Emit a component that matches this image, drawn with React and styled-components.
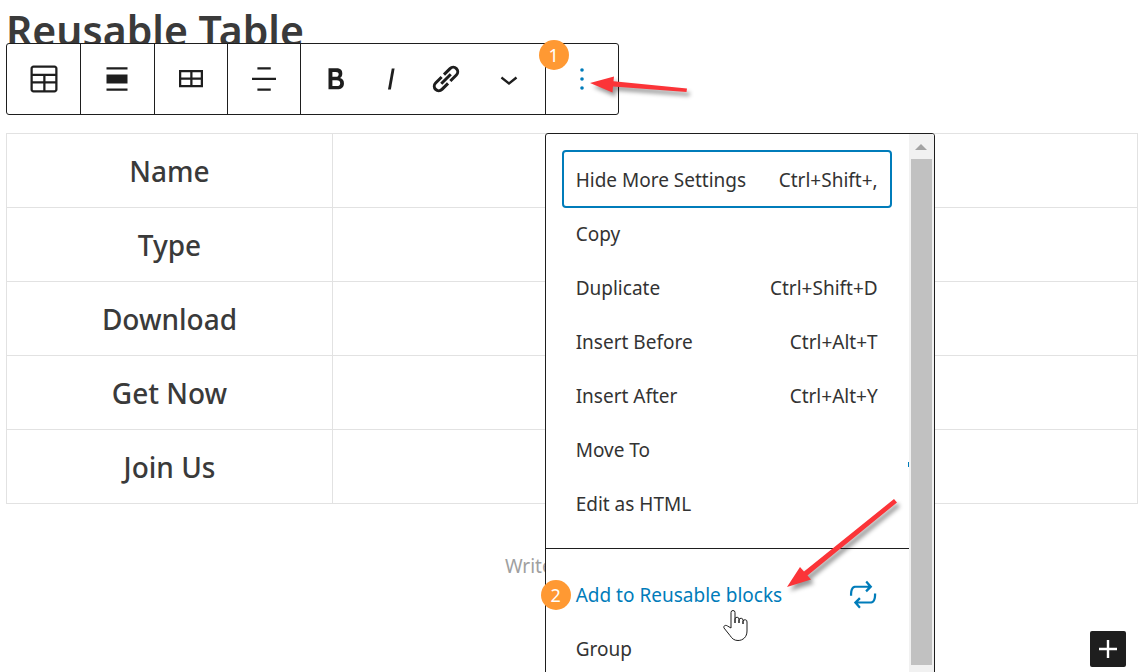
import React from "react";
import styled, { createGlobalStyle, css } from "styled-components";

const ink = "#1e1e1e";
const accent = "#007cba";
const sans = '"Segoe UI", "Noto Sans", "Open Sans", sans-serif';

const GlobalStyle = createGlobalStyle`
  *, *::before, *::after { box-sizing: border-box; }
  body { margin: 0; background: #fff; color: ${ink}; font-family: ${sans}; }
  button { font: inherit; color: inherit; background: none; border: 0; padding: 0; margin: 0; cursor: pointer; }
`;

const Editor = styled.main`
  position: relative;
  height: 100vh;
  overflow: hidden;
  padding: 0 6px;
`;

const Title = styled.h1`
  margin: 0;
  height: 43px;
  font-size: 41px;
  line-height: 60px;
  font-weight: 600;
  color: #3a3a3a;
`;

const Toolbar = styled.div`
  position: relative;
  z-index: 2;
  display: grid;
  grid-template-columns: 3fr 3fr 3fr 3fr 10fr 3fr;
  width: 613px;
  height: 72px;
  border: 1px solid ${ink};
  border-radius: 3px;
  background: #fff;
`;

const Group = styled.div`
  position: relative;
  display: flex;
  padding-left: ${(p) => (p.$inset ? "7px" : 0)};
  & + & { border-left: 1px solid ${ink}; }
`;

const ToolButton = styled.button`
  display: flex;
  align-items: center;
  justify-content: center;
  flex: ${(p) => (p.$fixed ? "0 0 55px" : "1")};
  color: ${(p) => (p.$active ? accent : ink)};
`;

const Icon = styled.svg.attrs({ viewBox: "0 0 24 24", "aria-hidden": true })`
  display: block;
  width: 36px;
  height: 36px;
  fill: currentColor;
`;

const Badge = styled.span`
  position: absolute;
  top: ${(p) => p.$top};
  left: ${(p) => p.$left};
  display: flex;
  align-items: center;
  justify-content: center;
  width: 30px;
  height: 30px;
  border-radius: 50%;
  background: #ff9933;
  color: #fff;
  font-size: 18px;
`;

const ArrowSvg = styled.svg`
  position: absolute;
  z-index: 3;
  top: ${(p) => p.$top};
  left: ${(p) => p.$left};
  overflow: visible;
  pointer-events: none;
  fill: #fb3438;
  filter: drop-shadow(3px 4px 2px rgba(0, 0, 0, 0.4));
`;

const Figure = styled.figure`
  margin: 18px 0 0;
`;

const Table = styled.table`
  width: 100%;
  border-collapse: collapse;
  table-layout: fixed;
`;

const Cell = styled.td`
  height: 74px;
  padding: 0;
  border: 1px solid #e2e2e2;
  text-align: center;
  font-size: 28px;
  font-weight: 500;
  color: #3a3a3a;
  &:first-child { width: 326px; }
`;

const Caption = styled.figcaption`
  margin-top: 48px;
  text-align: center;
  font-size: 19px;
  line-height: 28px;
  color: #a0a0a0;
`;

const Menu = styled.div`
  position: absolute;
  top: 89px;
  left: -1px;
  display: flex;
  width: 390px;
  height: 580px;
  overflow: hidden;
  border: 1px solid ${ink};
  border-radius: 3px;
  background: #fff;
`;

const MenuBody = styled.div`
  flex: 1;
  position: relative;
`;

const MenuGroup = styled.div`
  padding: 18px 19px 18px 18px;
  & + & { border-top: 1px solid ${ink}; }
`;

const MenuItem = styled.button`
  display: flex;
  align-items: center;
  justify-content: space-between;
  width: 100%;
  height: 54px;
  padding: 2px 12px 0;
  font-size: 19px;
  color: #333;
  text-align: left;
  white-space: nowrap;
  border-radius: 2px;
  ${(p) => p.$focused && css`outline: 2px solid ${accent};`}
  ${(p) => p.$active && css`color: ${accent}; padding-right: 9px;`}
`;

const ResizeMark = styled.span`
  position: absolute;
  top: 328px;
  right: 0;
  width: 1px;
  height: 5px;
  background: ${accent};
`;

const Scrollbar = styled.div`
  display: flex;
  flex-direction: column;
  align-items: center;
  width: 25px;
  background: #f1f1f1;
`;

const ScrollArrow = styled.svg`
  flex: none;
  width: 12px;
  height: 25px;
  fill: #a3a3a3;
`;

const Thumb = styled.div`
  width: 21px;
  height: 506px;
  background: #c1c1c1;
`;

const Cursor = styled.svg`
  position: absolute;
  z-index: 3;
  top: 609px;
  left: 722px;
  width: 26px;
  height: 33px;
  fill: #fff;
  stroke: ${ink};
  stroke-linejoin: round;
`;

const Inserter = styled.button`
  position: absolute;
  right: 18px;
  bottom: 5px;
  width: 36px;
  height: 36px;
  border-radius: 2px;
  background: ${ink};
  color: #fff;
`;

const paths = {
  table: "M19 3H5c-1.1 0-2 .9-2 2v14c0 1.1.9 2 2 2h14c1.1 0 2-.9 2-2V5c0-1.1-.9-2-2-2zM5 4.5h14c.3 0 .5.2.5.5v3.5h-15V5c0-.3.2-.5.5-.5zm8 5.5h6.5v3.5H13V10zm-1.5 3.5h-7V10h7v3.5zm-7 5.5v-4h7v4.5H5c-.3 0-.5-.2-.5-.5zm14.5.5h-6V15h6.5v4c0 .3-.2.5-.5.5z",
  align: "M5 15h14V9H5v6zm0 4.8h14v-1.5H5v1.5zM5 4.2v1.5h14V4.2H5z",
  cells: "M4 6v11.5h16V6H4zm1.5 1.5h6V11h-6V7.5zm0 8.5v-3.5h6V16h-6zm13 0H13v-3.5h5.5V16zM13 11V7.5h5.5V11H13z",
  center: "M16.4 4.2H7.6v1.5h8.9V4.2zM4 11.2v1.5h16v-1.5H4zm3.6 8.6h8.9v-1.5H7.6v1.5z",
  bold: "M14.7 11.3c1-.6 1.5-1.6 1.5-3 0-2.3-1.3-3.4-4-3.4H7v14h5.8c1.4 0 2.5-.3 3.3-1 .8-.7 1.2-1.7 1.2-2.9.1-1.9-.8-3.1-2.6-3.7zm-5.1-4h2.3c.6 0 1.1.1 1.4.4.3.3.5.7.5 1.2s-.2 1-.5 1.2c-.3.3-.8.4-1.4.4H9.6V7.3zm4.6 9c-.4.3-1 .4-1.7.4H9.6v-3.9h2.9c.7 0 1.3.2 1.7.5.4.3.6.8.6 1.5s-.2 1.2-.6 1.5z",
  italic: "M12.5 5L10 19h1.9l2.5-14z",
  chevron: "M17.5 11.6L12 16l-5.5-4.4.9-1.2L12 14l4.5-3.6 1 1.2z",
  reusable: "M7 7.2h8.2L13.5 9l1.1 1.1 3.6-3.6-3.5-4-1.1 1 1.9 2.3H7c-.9 0-1.7.3-2.3.9-1.4 1.5-1.4 4.2-1.4 5.6v.2h1.5v-.3c0-1.1 0-3.5 1-4.5.3-.3.7-.5 1.2-.5zm13.8 4V11h-1.5v.3c0 1.1 0 3.5-1 4.5-.3.3-.7.5-1.3.5H8.8l1.7-1.7-1.1-1.1L5.9 17l3.5 4 1.1-1-1.9-2.3H17c.9 0 1.7-.3 2.3-.9 1.5-1.4 1.5-4.2 1.5-5.6z",
  plus: "M18 11.2h-5.2V6h-1.6v5.2H6v1.6h5.2V18h1.6v-5.2H18z",
};

const Glyph = ({ name }) => (
  <Icon><path d={paths[name]} /></Icon>
);

const LinkGlyph = () => (
  <Icon>
    <g transform="rotate(-45 12 12)" fill="none" stroke="currentColor" strokeWidth="2">
      <path d="M10.900 15H5.200a3 3 0 0 1 0-6h5.700M13.100 9h5.700a3 3 0 0 1 0 6h-5.700M7.500 12h9" />
    </g>
  </Icon>
);

const rows = ["Name", "Type", "Download", "Get Now", "Join Us"];

const actions = [
  ["Hide More Settings", "Ctrl+Shift+,"],
  ["Copy"],
  ["Duplicate", "Ctrl+Shift+D"],
  ["Insert Before", "Ctrl+Alt+T"],
  ["Insert After", "Ctrl+Alt+Y"],
  ["Move To"],
  ["Edit as HTML"],
];

export default function App() {
  return (
    <>
      <GlobalStyle />
      <Editor>
        <Title>Reusable Table</Title>
        <Toolbar role="toolbar" aria-label="Block tools">
          <Group><ToolButton aria-label="Table"><Glyph name="table" /></ToolButton></Group>
          <Group><ToolButton aria-label="Change alignment"><Glyph name="align" /></ToolButton></Group>
          <Group><ToolButton aria-label="Edit table"><Glyph name="cells" /></ToolButton></Group>
          <Group><ToolButton aria-label="Align column"><Glyph name="center" /></ToolButton></Group>
          <Group $inset>
            <ToolButton $fixed aria-label="Bold"><Glyph name="bold" /></ToolButton>
            <ToolButton $fixed aria-label="Italic"><Glyph name="italic" /></ToolButton>
            <ToolButton $fixed aria-label="Link"><LinkGlyph /></ToolButton>
            <ToolButton aria-label="More formats"><Glyph name="chevron" /></ToolButton>
          </Group>
          <Group>
            <ToolButton $active aria-label="Options">
              <Icon>
                <circle cx="12" cy="6" r="1.2" />
                <circle cx="12" cy="12" r="1.2" />
                <circle cx="12" cy="18" r="1.2" />
              </Icon>
            </ToolButton>
            <Menu>
              <MenuBody>
                <MenuGroup>
                  {actions.map(([label, keys], i) => (
                    <MenuItem key={label} $focused={i === 0}>
                      <span>{label}</span>
                      {keys && <span>{keys}</span>}
                    </MenuItem>
                  ))}
                </MenuGroup>
                <MenuGroup>
                  <MenuItem $active>
                    <span>Add to Reusable blocks</span>
                    <Glyph name="reusable" />
                  </MenuItem>
                  <MenuItem><span>Group</span></MenuItem>
                </MenuGroup>
                <ResizeMark />
              </MenuBody>
              <Scrollbar aria-hidden="true">
                <ScrollArrow viewBox="0 0 12 25"><path d="M0 16l6-6 6 6z" /></ScrollArrow>
                <Thumb />
              </Scrollbar>
            </Menu>
            <Badge $top="-4px" $left="-7px">1</Badge>
            <Badge $top="536px" $left="-5px">2</Badge>
          </Group>
        </Toolbar>
        <Figure>
          <Table>
            <tbody>
              {rows.map((label) => (
                <tr key={label}><Cell>{label}</Cell><Cell /></tr>
              ))}
            </tbody>
          </Table>
          <Caption>Write caption…</Caption>
        </Figure>
        <ArrowSvg $top="75px" $left="590px" width="100" height="24">
          <path d="M0 8L24 1.500 23.500 6.200 97 13.500 96.500 17 23 11.500 22.500 17.500z" />
        </ArrowSvg>
        <ArrowSvg $top="498px" $left="787px" width="112" height="90">
          <path d="M0 89L13 69 17 73.500 107 1 110 4.500 20.500 77.500 24 81.500z" />
        </ArrowSvg>
        <Cursor viewBox="0 0 26 33" aria-hidden="true">
          <path d="M9 19V3.500a2 2 0 0 1 4 0V14v-4a2 2 0 0 1 4 .5V14v-3a2 2 0 0 1 4 .5V15v-2.500a2 2 0 0 1 4 .5V22c0 6-4 9.500-9 9.500-4 0-6-2-8-5l-6-7.500c-1-2 1.500-3.500 3.500-2z" />
        </Cursor>
        <Inserter aria-label="Add block"><Glyph name="plus" /></Inserter>
      </Editor>
    </>
  );
}
